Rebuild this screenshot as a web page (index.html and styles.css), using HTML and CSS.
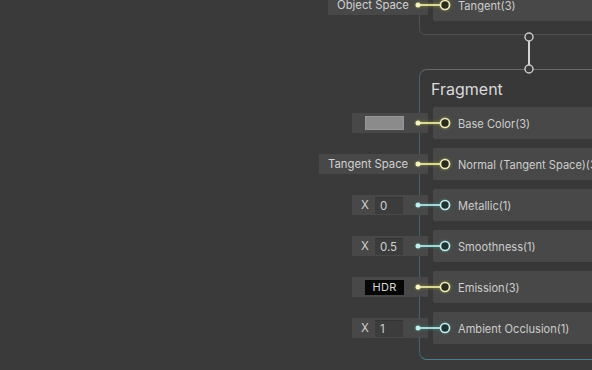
FILE: index.html
```html
<!DOCTYPE html>
<html>
<head>
<meta charset="utf-8">
<link rel="stylesheet" href="styles.css">
</head>
<body>
<div class="canvas">
  <div class="node node-top">
    <div class="row">
      <div class="slot"><div class="field"><span class="label">Object Space</span></div></div>
      <div class="port"><span class="port-name">Tangent(3)</span></div>
      <svg class="wire v3" width="40" height="32" viewBox="0 0 40 32"><line x1="5" y1="16" x2="28" y2="16"/><circle class="dot" cx="5" cy="16" r="2.5"/><circle class="ring" cx="32" cy="16" r="4.5"/></svg>
    </div>
  </div>

  <div class="node node-frag">
    <div class="title">Fragment</div>
    <div class="rows">
      <div class="row">
        <div class="slot"><div class="field"><span class="swatch"></span></div></div>
        <div class="port"><span class="port-name">Base Color(3)</span></div>
        <svg class="wire v3" width="40" height="32" viewBox="0 0 40 32"><line x1="5" y1="16" x2="28" y2="16"/><circle class="dot" cx="5" cy="16" r="2.5"/><circle class="ring" cx="32" cy="16" r="4.5"/></svg>
      </div>
      <div class="row">
        <div class="slot"><div class="field field-wide"><span class="label">Tangent Space</span></div></div>
        <div class="port"><span class="port-name">Normal (Tangent Space)(3)</span></div>
        <svg class="wire v3" width="40" height="32" viewBox="0 0 40 32"><line x1="5" y1="16" x2="28" y2="16"/><circle class="dot" cx="5" cy="16" r="2.5"/><circle class="ring" cx="32" cy="16" r="4.5"/></svg>
      </div>
      <div class="row">
        <div class="slot"><div class="field field-x"><span class="x">X</span><span class="num">0</span></div></div>
        <div class="port"><span class="port-name">Metallic(1)</span></div>
        <svg class="wire v1" width="40" height="32" viewBox="0 0 40 32"><line x1="5" y1="16" x2="28" y2="16"/><circle class="dot" cx="5" cy="16" r="2.5"/><circle class="ring" cx="32" cy="16" r="4.5"/></svg>
      </div>
      <div class="row">
        <div class="slot"><div class="field field-x"><span class="x">X</span><span class="num">0.5</span></div></div>
        <div class="port"><span class="port-name">Smoothness(1)</span></div>
        <svg class="wire v1" width="40" height="32" viewBox="0 0 40 32"><line x1="5" y1="16" x2="28" y2="16"/><circle class="dot" cx="5" cy="16" r="2.5"/><circle class="ring" cx="32" cy="16" r="4.5"/></svg>
      </div>
      <div class="row">
        <div class="slot"><div class="field"><span class="hdr">HDR</span></div></div>
        <div class="port"><span class="port-name">Emission(3)</span></div>
        <svg class="wire v3" width="40" height="32" viewBox="0 0 40 32"><line x1="5" y1="16" x2="28" y2="16"/><circle class="dot" cx="5" cy="16" r="2.5"/><circle class="ring" cx="32" cy="16" r="4.5"/></svg>
      </div>
      <div class="row">
        <div class="slot"><div class="field field-x"><span class="x">X</span><span class="num">1</span></div></div>
        <div class="port"><span class="port-name">Ambient Occlusion(1)</span></div>
        <svg class="wire v1" width="40" height="32" viewBox="0 0 40 32"><line x1="5" y1="16" x2="28" y2="16"/><circle class="dot" cx="5" cy="16" r="2.5"/><circle class="ring" cx="32" cy="16" r="4.5"/></svg>
      </div>
    </div>
  </div>

  <svg class="flow" width="12" height="46" viewBox="0 0 12 46"><line x1="6" y1="7" x2="6" y2="39"/><circle cx="6" cy="7" r="4"/><circle cx="6" cy="39" r="4"/></svg>
</div>
</body>
</html>
```

FILE: styles.css
```css
html, body {
  margin: 0;
  padding: 0;
  background: #3a3a3a;
}
.canvas {
  position: relative;
  width: 592px;
  height: 370px;
  overflow: hidden;
  background: #3a3a3a;
  font-family: Inter, "Noto Sans", sans-serif;
  font-size: 11px;
  color: #c8c8c8;
}
.node {
  position: absolute;
  left: 419px;
  width: 240px;
  box-sizing: border-box;
  background: #383838;
}
.node-top {
  top: -12px;
  border: 1px solid #505050;
  border-radius: 6px;
  padding: 0 0 13px 0;
}
.node-frag {
  top: 69px;
  border: 1px solid #4e7b86;
  border-top-color: #676767;
  border-left-color: #3e6673;
  border-radius: 8px;
  padding: 0 0 15px 0;
}
.title {
  height: 37px;
  padding-left: 11px;
  display: flex;
  align-items: center;
  font-size: 16px;
  color: #dadada;
}
.rows {
  display: flex;
  flex-direction: column;
  gap: 9px;
}
.row {
  position: relative;
  display: flex;
  align-items: center;
  gap: 5px;
  margin-left: -101px;
  height: 32px;
}
.slot {
  width: 109px;
  flex: none;
  display: flex;
  justify-content: flex-end;
}
.field {
  height: 20px;
  width: 76px;
  box-sizing: border-box;
  background: #484848;
  display: flex;
  align-items: center;
  padding-left: 13px;
  border-radius: 1px;
}
.node-top .field {
  width: 100px;
  padding-left: 9px;
}
.field-wide {
  width: 109px;
  padding-left: 9px;
}
.label {
  color: #d0d0d0;
  white-space: nowrap;
  font-size: 11.3px;
}
.swatch {
  width: 39px;
  height: 14px;
  background: #8b8b8b;
  box-sizing: border-box;
  border: 1px solid #979797;
}
.hdr {
  width: 39px;
  height: 15px;
  background: #060606;
  color: #d8d8d8;
  font-size: 11px;
  display: flex;
  align-items: center;
  justify-content: center;
  letter-spacing: 0.3px;
}
.field-x {
  padding-left: 9px;
}
.x {
  width: 14px;
  color: #cfcfcf;
  font-size: 11.5px;
}
.num {
  width: 28px;
  height: 17px;
  box-sizing: border-box;
  background: #3c3c3c;
  border-top: 1px solid #333;
  padding-left: 5px;
  display: flex;
  align-items: center;
  color: #d0d0d0;
  font-size: 11.5px;
}
.port {
  flex: none;
  width: 200px;
  height: 32px;
  box-sizing: border-box;
  background: #484848;
  border-radius: 2px;
  display: flex;
  align-items: center;
  padding-left: 25px;
  padding-top: 1px;
}
.port-name {
  white-space: nowrap;
  color: #cdcdcd;
  font-size: 11.1px;
}
.wire {
  position: absolute;
  left: 94px;
  top: 0;
  overflow: visible;
}
.wire line {
  stroke-width: 1.8;
}
.wire .ring {
  stroke-width: 1.6;
}
.v3 {
  filter: drop-shadow(0 0 1.5px rgba(170, 170, 40, 0.8));
}
.v3 line { stroke: #e6e6a8; }
.v3 .dot { fill: #f2f2c6; }
.v3 .ring { stroke: #ececc4; fill: #2b2b1c; }
.v1 {
  filter: drop-shadow(0 0 1.5px rgba(60, 150, 150, 0.8));
}
.v1 line { stroke: #b6e2e2; }
.v1 .dot { fill: #c4ecec; }
.v1 .ring { stroke: #cfeaea; fill: #1c3434; }
.flow {
  position: absolute;
  left: 523px;
  top: 30px;
  overflow: visible;
}
.flow line {
  stroke: #d4d4d4;
  stroke-width: 2;
}
.flow circle {
  stroke: #c9c9c9;
  stroke-width: 1.5;
  fill: #3a3a3a;
}
```
